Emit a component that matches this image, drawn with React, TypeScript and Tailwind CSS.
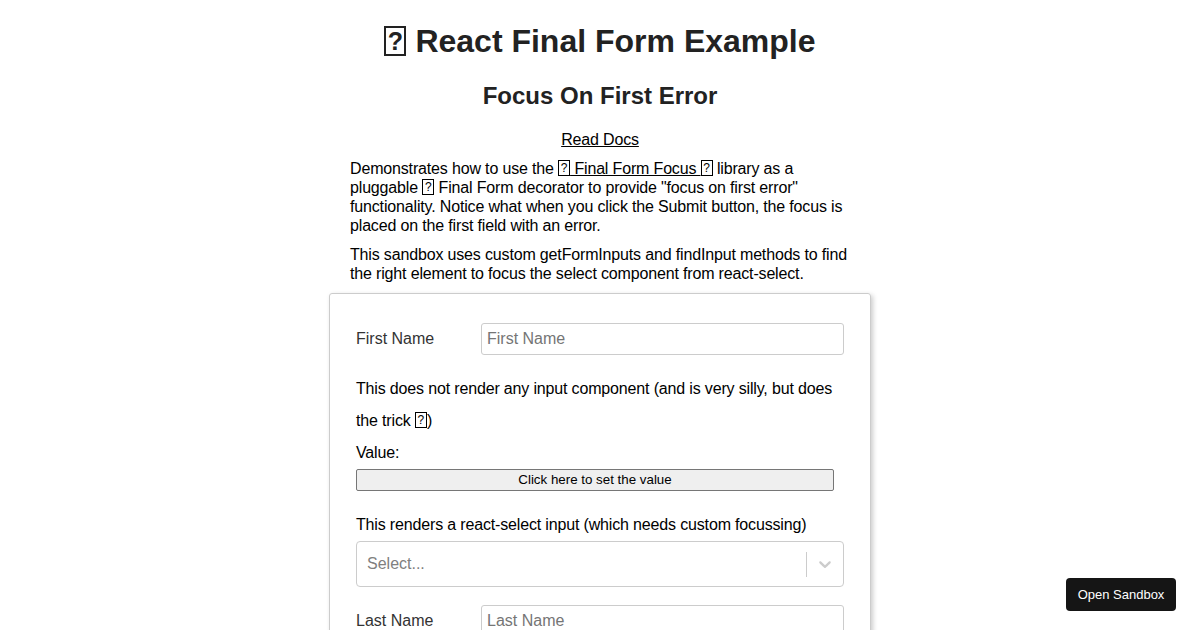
import React from "react";

function Tofu({ big = false }: { big?: boolean }) {
  return big ? (
    <span className="inline-block h-[30px] w-[22px] overflow-hidden border-2 border-current text-center align-[-4px] text-[25px] leading-[26px] font-bold">
      ?
    </span>
  ) : (
    <span className="inline-block h-[16px] w-[12px] overflow-hidden border border-current text-center align-[-2px] text-[12px] leading-[14px] font-normal">
      ?
    </span>
  );
}

const body = "tracking-[-0.16px] text-black";

export default function App() {
  return (
    <div className="min-h-screen bg-white text-[#222] font-['Liberation_Sans',Arial,sans-serif] text-[16px]">
      <h1 className="pt-[23px] text-center text-[32px] font-bold leading-[37px]">
        <Tofu big /> React Final Form Example
      </h1>
      <h2 className="mt-[22px] text-center text-[24px] font-bold leading-[28px]">Focus On First Error</h2>
      <div className={`mt-[20px] text-center leading-[19px] ${body}`}>
        <a href="#" className="underline">Read Docs</a>
      </div>
      <p className={`mx-auto mt-[10px] w-[500px] leading-[19px] ${body}`}>
        Demonstrates how to use the{" "}
        <a href="#" className="underline">
          <Tofu /> Final Form Focus <Tofu />
        </a>{" "}
        library as a pluggable <Tofu /> Final Form decorator to provide "focus on first error" functionality.
        Notice what when you click the Submit button, the focus is placed on the first field with an error.
      </p>
      <p className={`mx-auto mt-[10px] w-[500px] leading-[19px] ${body}`}>
        This sandbox uses custom getFormInputs and findInput methods to find the right element to focus the
        select component from react-select.
      </p>
      <form className="mx-auto mt-[10px] mb-[10px] w-[542px] rounded-[3px] border border-[#ccc] px-[26px] pt-[29px] pb-[25px] shadow-[2px_2px_5px_#ccc]">
        <div className="flex leading-8">
          <label className="w-[110px] text-[#333]">First Name</label>
          <input
            className="ml-[15px] h-8 flex-1 rounded-[3px] border border-[#ccc] px-[5px] text-[16px] placeholder-[#757575] outline-none"
            placeholder="First Name"
          />
        </div>
        <div className={`mt-[18px] leading-8 ${body}`}>
          This does not render any input component (and is very silly, but does the trick <Tofu />)
        </div>
        <div className={`leading-8 ${body}`}>Value:</div>
        <button
          type="button"
          className="block h-[22px] w-[478px] rounded-[2px] border border-[#767676] bg-[#efefef] text-[13.33px] leading-[20px] text-black"
        >
          Click here to set the value
        </button>
        <div className={`mt-[18px] leading-8 ${body}`}>
          This renders a react-select input (which needs custom focussing)
        </div>
        <div className="flex h-[46px] items-center rounded-[4px] border border-[#ccc] bg-white">
          <div className="flex-1 pl-[10px] text-[#808080]">Select...</div>
          <div className="h-[25px] w-px bg-[#ccc]" />
          <div className="flex w-[36px] items-center justify-center">
            <svg width="20" height="20" viewBox="0 0 20 20" fill="#ccc">
              <path d="M4.516 7.548c0.436-0.446 1.043-0.481 1.576 0l3.908 3.747 3.908-3.747c0.533-0.481 1.141-0.446 1.574 0 0.436 0.445 0.408 1.197 0 1.615-0.406 0.418-4.695 4.502-4.695 4.502-0.217 0.223-0.502 0.335-0.787 0.335s-0.57-0.112-0.789-0.335c0 0-4.287-4.084-4.695-4.502s-0.436-1.17 0-1.615z" />
            </svg>
          </div>
        </div>
        <div className="mt-[18px] flex leading-8">
          <label className="w-[110px] text-[#333]">Last Name</label>
          <input
            className="ml-[15px] h-8 flex-1 rounded-[3px] border border-[#ccc] px-[5px] text-[16px] placeholder-[#757575] outline-none"
            placeholder="Last Name"
          />
        </div>
        <div className="mt-[10px] flex justify-center gap-2">
          <button type="button" className="rounded-[3px] border border-[#ccc] px-[15px] py-[3px]">Submit</button>
          <button type="button" className="rounded-[3px] border border-[#ccc] px-[15px] py-[3px]">Reset</button>
        </div>
      </form>
      <div className="fixed right-[24px] bottom-[19px] flex h-[33px] w-[110px] items-center justify-center rounded-[4px] bg-[#151515] text-[13px] text-white">
        Open Sandbox
      </div>
    </div>
  );
}
